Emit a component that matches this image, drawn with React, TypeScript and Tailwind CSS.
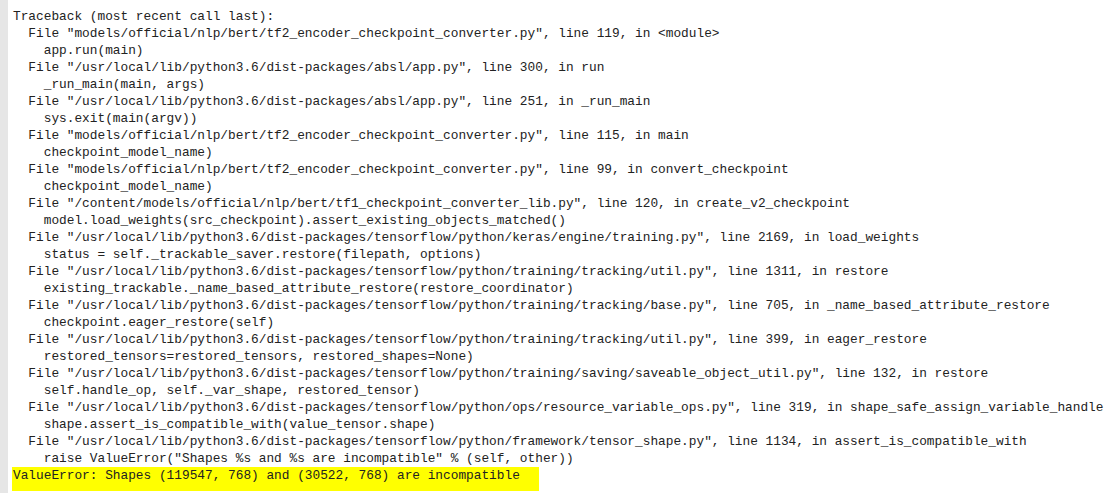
const lines = [
  'Traceback (most recent call last):',
  '  File "models/official/nlp/bert/tf2_encoder_checkpoint_converter.py", line 119, in <module>',
  '    app.run(main)',
  '  File "/usr/local/lib/python3.6/dist-packages/absl/app.py", line 300, in run',
  '    _run_main(main, args)',
  '  File "/usr/local/lib/python3.6/dist-packages/absl/app.py", line 251, in _run_main',
  '    sys.exit(main(argv))',
  '  File "models/official/nlp/bert/tf2_encoder_checkpoint_converter.py", line 115, in main',
  '    checkpoint_model_name)',
  '  File "models/official/nlp/bert/tf2_encoder_checkpoint_converter.py", line 99, in convert_checkpoint',
  '    checkpoint_model_name)',
  '  File "/content/models/official/nlp/bert/tf1_checkpoint_converter_lib.py", line 120, in create_v2_checkpoint',
  '    model.load_weights(src_checkpoint).assert_existing_objects_matched()',
  '  File "/usr/local/lib/python3.6/dist-packages/tensorflow/python/keras/engine/training.py", line 2169, in load_weights',
  '    status = self._trackable_saver.restore(filepath, options)',
  '  File "/usr/local/lib/python3.6/dist-packages/tensorflow/python/training/tracking/util.py", line 1311, in restore',
  '    existing_trackable._name_based_attribute_restore(restore_coordinator)',
  '  File "/usr/local/lib/python3.6/dist-packages/tensorflow/python/training/tracking/base.py", line 705, in _name_based_attribute_restore',
  '    checkpoint.eager_restore(self)',
  '  File "/usr/local/lib/python3.6/dist-packages/tensorflow/python/training/tracking/util.py", line 399, in eager_restore',
  '    restored_tensors=restored_tensors, restored_shapes=None)',
  '  File "/usr/local/lib/python3.6/dist-packages/tensorflow/python/training/saving/saveable_object_util.py", line 132, in restore',
  '    self.handle_op, self._var_shape, restored_tensor)',
  '  File "/usr/local/lib/python3.6/dist-packages/tensorflow/python/ops/resource_variable_ops.py", line 319, in shape_safe_assign_variable_handle',
  '    shape.assert_is_compatible_with(value_tensor.shape)',
  '  File "/usr/local/lib/python3.6/dist-packages/tensorflow/python/framework/tensor_shape.py", line 1134, in assert_is_compatible_with',
  '    raise ValueError("Shapes %s and %s are incompatible" % (self, other))',
]

export default function App() {
  return (
    <div className="flex h-[493px] w-[1117px] overflow-hidden bg-white">
      <div className="w-[8px] shrink-0 bg-[#e6e6e6]" />
      <div className="pl-[5px] pt-[8px] font-['Liberation_Mono',monospace] text-[12.8px] leading-[17px] text-[#222]">
        {lines.map((l, i) => (
          <div key={i} className="whitespace-pre">
            {l}
          </div>
        ))}
        <div className="-ml-[1px] h-[24px] w-[527px] bg-[#ffff00] pl-[1px] whitespace-pre">
          ValueError: Shapes (119547, 768) and (30522, 768) are incompatible
        </div>
      </div>
    </div>
  )
}
